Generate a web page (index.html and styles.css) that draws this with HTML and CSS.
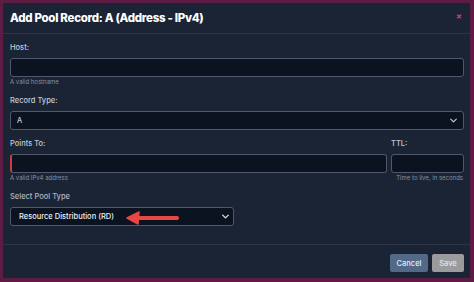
FILE: index.html
```html
<!DOCTYPE html>
<html>
<head>
<meta charset="utf-8">
<link rel="stylesheet" href="styles.css">
</head>
<body>
<div class="modal">
  <div class="modal-header">
    <h1 class="title">Add Pool Record: A (Address - IPv4)</h1>
    <span class="close">&#x2715;</span>
  </div>
  <div class="modal-body">
    <div class="group">
      <div class="label">Host:</div>
      <div class="input"></div>
      <div class="help">A valid hostname</div>
    </div>
    <div class="group">
      <div class="label">Record Type:</div>
      <div class="input select"><span>A</span><svg class="chev" viewBox="0 0 10 6" width="7" height="5"><path d="M1 1 L5 5 L9 1" fill="none" stroke="#c8ced8" stroke-width="1.6" stroke-linecap="round" stroke-linejoin="round"/></svg></div>
    </div>
    <div class="row">
      <div class="group grow">
        <div class="label">Points To:</div>
        <div class="input invalid"></div>
        <div class="help">A valid IPv4 address</div>
      </div>
      <div class="group ttl">
        <div class="label">TTL:</div>
        <div class="input"></div>
        <div class="help">Time to live, in seconds</div>
      </div>
    </div>
    <div class="group pool">
      <div class="label">Select Pool Type</div>
      <div class="input select"><span class="val">Resource Distribution (RD)</span><svg class="chev" viewBox="0 0 10 6" width="7" height="5"><path d="M1 1 L5 5 L9 1" fill="none" stroke="#e2e6ec" stroke-width="1.8" stroke-linecap="round" stroke-linejoin="round"/></svg></div>
      <svg class="arrow" viewBox="0 0 54 14" width="54" height="14"><path d="M10 7 H51" stroke="#ea4646" stroke-width="4" stroke-linecap="round"/><path d="M1 7 L13 1 L12 13 Z" fill="#ea4646" stroke="#ea4646" stroke-width="1.5" stroke-linejoin="round"/></svg>
    </div>
  </div>
  <div class="modal-footer">
    <button class="btn cancel">Cancel</button>
    <button class="btn save">Save</button>
  </div>
</div>
</body>
</html>
```
FILE: styles.css
```css
html, body {
  margin: 0;
  padding: 0;
  background: #5e1c44;
  font-family: Inter, "Noto Sans", sans-serif;
}
body {
  width: 474px;
  height: 282px;
  padding: 3px 4px 4px 3px;
  box-sizing: border-box;
}
.modal {
  width: 467px;
  height: 275px;
  background: #1b2435;
  display: flex;
  flex-direction: column;
}
.modal-header {
  height: 30px;
  border-bottom: 1px solid #2b3547;
  display: flex;
  align-items: center;
  justify-content: space-between;
  padding: 0 8px 0 7px;
  box-sizing: content-box;
}
.title {
  margin: 0;
  font-size: 11.5px;
  font-weight: 800;
  color: #ffffff;
  letter-spacing: -0.3px;
}
.close {
  color: #d9448a;
  font-size: 6.5px;
  font-weight: 700;
  margin-top: -3px;
}
.modal-body {
  flex: 1;
  padding: 8px 6px 0 7px;
  display: flex;
  flex-direction: column;
  gap: 8px;
  border-bottom: 1px solid #2b3547;
}
.group {
  display: flex;
  flex-direction: column;
  position: relative;
}
.label {
  font-size: 7.5px;
  font-weight: 500;
  line-height: 11px;
  height: 11px;
  color: #c3cad5;
  margin-bottom: 5px;
}
.input {
  height: 19px;
  box-sizing: border-box;
  background: #0b1220;
  border: 1px solid #4f596b;
  border-radius: 3px;
}
.input.invalid {
  border-left: 2px solid #d03a3a;
}
.help {
  font-size: 6px;
  line-height: 10px;
  height: 10px;
  color: #8791a3;
  white-space: nowrap;
}
.select {
  display: flex;
  align-items: center;
  justify-content: space-between;
  padding: 0 6px 0 6px;
  font-size: 7.5px;
  color: #eef1f5;
}
.row {
  display: flex;
  gap: 4px;
}
.grow {
  flex: 1;
}
.ttl {
  width: 73px;
}
.ttl .help {
  text-align: right;
  padding-right: 1px;
}
.pool {
  width: 224px;
}
.pool .label {
  color: #aeb6c3;
}
.pool .select {
  padding-left: 8px;
  padding-right: 4px;
}
.pool .val {
  font-weight: 500;
  font-size: 7.5px;
}
.arrow {
  position: absolute;
  left: 116px;
  top: 20px;
}
.modal-footer {
  height: 33px;
  display: flex;
  justify-content: flex-end;
  align-items: flex-start;
  padding: 9px 6px 0 0;
  gap: 4px;
  box-sizing: border-box;
}
.btn {
  height: 18px;
  border: none;
  border-radius: 2px;
  font-family: inherit;
  font-size: 7.5px;
  font-weight: 500;
  padding: 0;
}
.cancel {
  width: 38px;
  background: #536988;
  color: #e8ecf2;
}
.save {
  width: 32px;
  background: #9b9b9d;
  color: #e6e6e6;
}
```
